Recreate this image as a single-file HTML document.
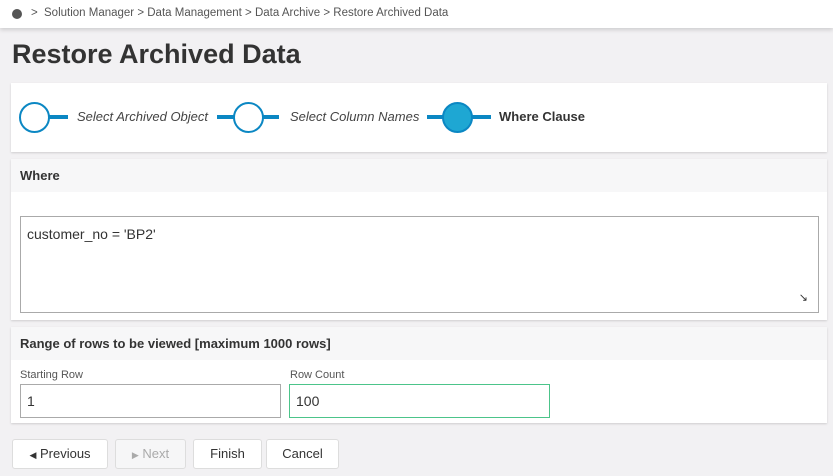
<!DOCTYPE html>
<html><head><style>
*{box-sizing:border-box;margin:0;padding:0}
body{width:833px;height:476px;background:#f2f1f3;font-family:"Liberation Sans",sans-serif;color:#333;position:relative;overflow:hidden}
.abs{position:absolute}
.top{left:0;top:0;width:833px;height:28px;background:#fff;box-shadow:0 2px 4px rgba(0,0,0,.15);font-size:11.5px;color:#555;line-height:27px}
.panel{background:#fff;left:11px;width:816px;box-shadow:0 1px 2px rgba(0,0,0,.15)}
.ph{background:#f7f7f8;height:33px;line-height:33px;padding-left:9px;font-size:13px;font-weight:bold;color:#333}
.circ{width:31px;height:31px;border:2.5px solid #0b87c3;border-radius:50%;background:#fff;top:102px}
.line{height:4px;background:#0b87c3;top:115px}
.st{top:109px;font-size:13px;font-style:italic;color:#444}
.inp{border:1px solid #aaa;height:34px;font-size:14px;line-height:32px;padding-left:6px;background:#fff}
.btn{top:439px;height:30px;border:1px solid #ddd;border-radius:3px;background:#fff;font-size:13px;line-height:28px;text-align:center;color:#333}
</style></head><body>
<div class="abs top"><span class="abs" style="left:12px;top:9px;width:10px;height:10px;border-radius:50%;background:#555"></span><span class="abs" style="left:31px;top:0">&gt;</span><span class="abs" style="left:44px;top:0">Solution Manager &gt; Data Management &gt; Data Archive &gt; Restore Archived Data</span></div>
<div class="abs" style="left:12px;top:39px;font-size:27px;font-weight:bold;color:#333">Restore Archived Data</div>
<div class="abs panel" style="top:83px;height:69px"></div>
<div class="abs line" style="left:48px;width:20px"></div>
<div class="abs circ" style="left:19px"></div>
<div class="abs st" style="left:77px">Select Archived Object</div>
<div class="abs line" style="left:217px;width:62px"></div>
<div class="abs circ" style="left:233px"></div>
<div class="abs st" style="left:290px">Select Column Names</div>
<div class="abs line" style="left:427px;width:64px"></div>
<div class="abs circ" style="left:442px;background:#1ea7d3;border-color:#0b87c3"></div>
<div class="abs" style="left:499px;top:109px;font-size:13px;font-weight:bold;color:#333">Where Clause</div>
<div class="abs panel" style="top:159px;height:161px"><div class="ph">Where</div></div>
<div class="abs" style="left:20px;top:216px;width:799px;height:97px;border:1px solid #aaa;background:#fff;padding:9px 6px;font-size:14px">customer_no = 'BP2'<span class="abs" style="right:10px;bottom:8px;font-size:11px">&#8600;</span></div>
<div class="abs panel" style="top:327px;height:96px"><div class="ph">Range of rows to be viewed [maximum 1000 rows]</div></div>
<div class="abs" style="left:20px;top:369px;font-size:11px;color:#555">Starting Row</div>
<div class="abs" style="left:290px;top:369px;font-size:11px;color:#555">Row Count</div>
<div class="abs inp" style="left:20px;top:384px;width:261px">1</div>
<div class="abs inp" style="left:289px;top:384px;width:261px;border-color:#4cc48a">100</div>
<div class="abs btn" style="left:12px;width:96px"><span style="font-size:9px">&#9664;</span> Previous</div>
<div class="abs btn" style="left:115px;width:71px;color:#aaa;background:#f6f6f7"><span style="font-size:9px">&#9654;</span> Next</div>
<div class="abs btn" style="left:193px;width:69px">Finish</div>
<div class="abs btn" style="left:266px;width:73px">Cancel</div>
</body></html>
